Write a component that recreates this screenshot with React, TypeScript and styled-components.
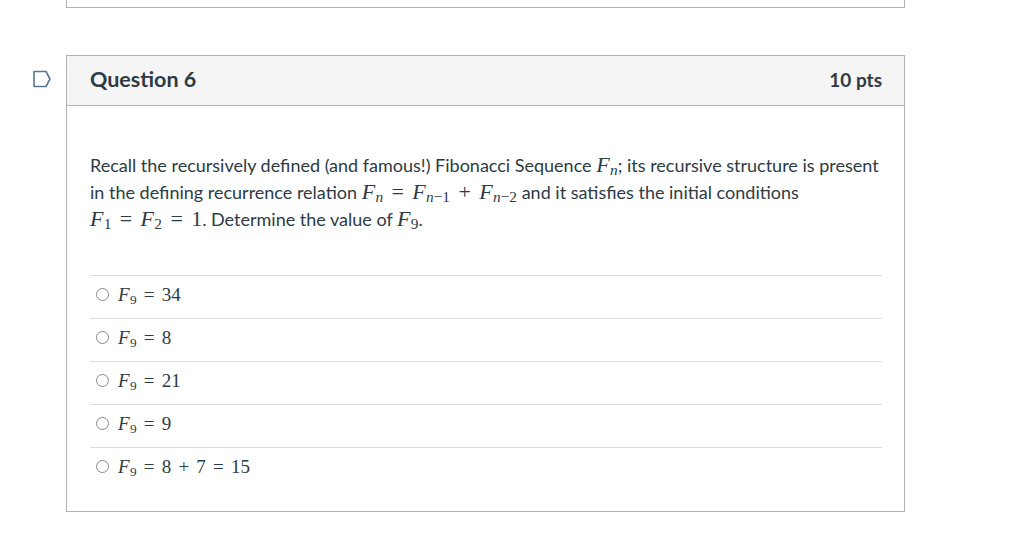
import React from 'react'
import styled, { createGlobalStyle } from 'styled-components'

const GlobalStyle = createGlobalStyle`
  body {
    margin: 0;
    background: #ffffff;
    font-family: Lato, 'Liberation Sans', sans-serif;
    color: #2d3b45;
  }
`

const Page = styled.div`
  width: 1011px;
  height: 536px;
  overflow: hidden;
  padding-left: 66px;
  box-sizing: border-box;
`

const PrevBox = styled.div`
  width: 839px;
  height: 8px;
  box-sizing: border-box;
  border: 1px solid #b3b3b3;
  border-top: none;
`

const QuestionWrap = styled.div`
  position: relative;
  width: 839px;
  margin-top: 47px;
`

const Flag = styled.svg`
  position: absolute;
  left: -33px;
  top: 15px;
`

const Card = styled.div`
  border: 1px solid #b3b3b3;
`

const Header = styled.div`
  display: flex;
  align-items: center;
  justify-content: space-between;
  height: 50px;
  padding: 0 22px 3px 23px;
  box-sizing: border-box;
  background: #f5f5f5;
  border-bottom: 1px solid #b3b3b3;
`

const Title = styled.h2`
  margin: 0;
  font-size: 21.5px;
  font-weight: 700;
  color: #2d3b45;
`

const Points = styled.span`
  font-size: 19px;
  font-weight: 700;
  color: #2d3b45;
`

const Body = styled.div`
  padding: 46px 22px 21px 23px;
`

const Prompt = styled.p`
  margin: 0 0 42px;
  font-size: 18px;
  line-height: 27px;
`

const M = styled.span<{ $size?: number }>`
  font-family: 'Liberation Serif', 'DejaVu Serif', serif;
  font-size: ${({ $size }) => $size ?? 22}px;
  line-height: 1;
  white-space: nowrap;
`

const V = styled.i`
  font-style: italic;
`

const Sub = styled.sub`
  font-size: 0.7em;
  vertical-align: -0.22em;
  line-height: 0;
  margin-left: 0.02em;
`

const Op = styled.span`
  margin: 0 0.38em;
`

const Answers = styled.div`
  display: flex;
  flex-direction: column;
`

const Row = styled.label`
  display: flex;
  align-items: center;
  gap: 9px;
  height: 43px;
  padding: 0 0 5px 6px;
  box-sizing: border-box;
  border-top: 1px solid #dcdcdc;
`

const Radio = styled.span`
  width: 11px;
  height: 11px;
  border: 1px solid #8a8a8a;
  border-radius: 50%;
  background: #fff;
  flex-shrink: 0;
`

const F9 = () => (
  <>
    <V>F</V>
    <Sub>9</Sub>
  </>
)

const answers: React.ReactNode[] = [
  <><F9 /><Op>=</Op>34</>,
  <><F9 /><Op>=</Op>8</>,
  <><F9 /><Op>=</Op>21</>,
  <><F9 /><Op>=</Op>9</>,
  <><F9 /><Op>=</Op>8<Op>+</Op>7<Op>=</Op>15</>,
]

const App = () => {
  return (
    <Page>
      <GlobalStyle />
      <PrevBox />
      <QuestionWrap>
        <Flag width="18" height="18" viewBox="0 0 18 18">
          <path d="M1 1.5 H13 L17 9 L13 16.5 H1 Z" fill="none" stroke="#5b7694" strokeWidth="1.6" strokeLinejoin="round" />
        </Flag>
        <Card>
          <Header>
            <Title>Question 6</Title>
            <Points>10 pts</Points>
          </Header>
          <Body>
            <Prompt>
              Recall the recursively defined (and famous!) Fibonacci Sequence{' '}
              <M><V>F</V><Sub><V>n</V></Sub></M>; its recursive structure is present in the defining
              recurrence relation{' '}
              <M>
                <V>F</V><Sub><V>n</V></Sub><Op>=</Op><V>F</V><Sub><V>n</V>−1</Sub><Op>+</Op><V>F</V><Sub><V>n</V>−2</Sub>
              </M>{' '}
              and it satisfies the initial conditions{' '}
              <M>
                <V>F</V><Sub>1</Sub><Op>=</Op><V>F</V><Sub>2</Sub><Op>=</Op>1
              </M>
              . Determine the value of <M><F9 /></M>.
            </Prompt>
            <Answers>
              {answers.map((a, i) => (
                <Row key={i}>
                  <Radio />
                  <M $size={19}>{a}</M>
                </Row>
              ))}
            </Answers>
          </Body>
        </Card>
      </QuestionWrap>
    </Page>
  )
}

export default App
